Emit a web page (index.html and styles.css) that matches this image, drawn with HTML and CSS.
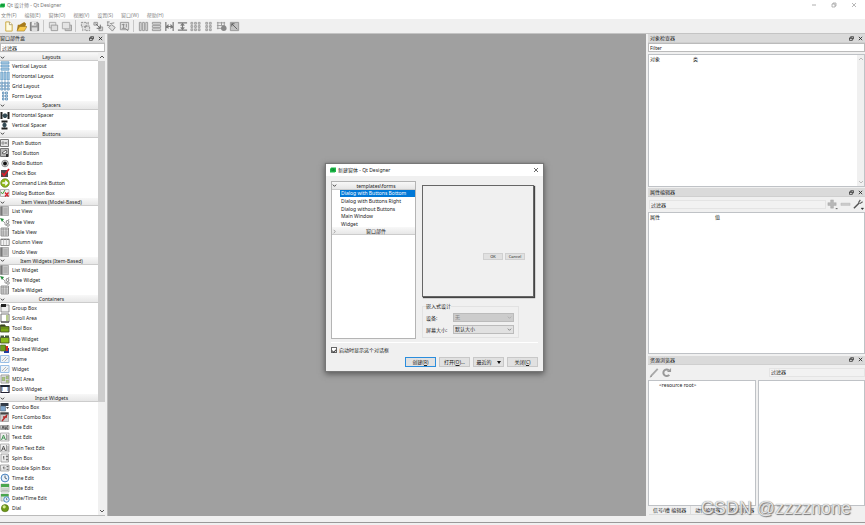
FILE: index.html
```html
<!DOCTYPE html>
<html lang="zh-CN">
<head>
<meta charset="utf-8">
<title>Qt 设计师 - Qt Designer</title>
<link rel="stylesheet" href="styles.css">
</head>
<body>
<svg class="defs" aria-hidden="true">
  <symbol id="qt" viewBox="0 0 10 10"><path d="M2 1h8v6L8 9H0V3z" fill="#1fb94a"/><path d="M3 3h3v3H3zM7 3v4" fill="none" stroke="#0a7a2a"/></symbol>
  <symbol id="float" viewBox="0 0 6 6"><path d="M2 2V.8h3.4v2.7H4M.6 2.3H4v3H.6zM.6 2.7H4" fill="none" stroke="#333" stroke-width=".9"/></symbol>
  <symbol id="x" viewBox="0 0 6 6"><path d="M1 1l4 4M5 1L1 5" fill="none" stroke="currentColor"/></symbol>
  <symbol id="down" viewBox="0 0 6 6"><path d="M1 2l2 2 2-2" fill="none" stroke="currentColor"/></symbol>
  <symbol id="up" viewBox="0 0 6 6"><path d="M1 4l2-2 2 2" fill="none" stroke="currentColor"/></symbol>
  <symbol id="right" viewBox="0 0 6 6"><path d="M2 1l2 2-2 2" fill="none" stroke="currentColor"/></symbol>

  <symbol id="new" viewBox="0 0 12 12"><path d="M3 1h4l3 3v7H3z" fill="#fffbe0" stroke="#c9a53a"/><path d="M7 1v3h3" fill="#fff" stroke="#8a7a4a" stroke-width=".7"/></symbol>
  <symbol id="open" viewBox="0 0 12 12"><path d="M1 10l1-6h2l5-3 2 2-2 7z" fill="#a77b1c"/><path d="M1 11l3-5h8l-3 5z" fill="#f7c94b" stroke="#94701c" stroke-width=".6"/></symbol>
  <symbol id="save" viewBox="0 0 12 12"><path d="M1.500 1.500h8l1 1v8h-9z" fill="#999" stroke="#777"/><path d="M3 1h5v4H3z" fill="#eee"/><path d="M3 7h6v4H3z" fill="#ddd"/><path d="M6 2h1v2H6z" fill="#777"/></symbol>
  <symbol id="front" viewBox="0 0 12 12"><path d="M1.500 1.500h7v6h-7z" fill="#e4e4e4" stroke="#aaa"/><path d="M3.500 4.500h7v6h-7z" fill="#ddd" stroke="#999"/></symbol>
  <symbol id="back" viewBox="0 0 12 12"><path d="M4.500 4.500h7v6h-7z" fill="#ccc" stroke="#999"/><path d="M1.500 1.500h8v7h-8z" fill="#e4e4e4" stroke="#aaa"/></symbol>
  <symbol id="ewid" viewBox="0 0 12 12"><path d="M1.500 1.500h6v5h-6zM5.500 5.500h5v5h-5z" fill="#ddd" stroke="#777" stroke-dasharray="2 1"/><path d="M9 1v3M3 8v3" stroke="#888"/></symbol>
  <symbol id="esig" viewBox="0 0 12 12"><path d="M1 1.500h4v3H1zM6.500 6.500h4v4h-4z" fill="#ccc" stroke="#888"/><path d="M3 3l5 5M8 4v4H4" fill="none" stroke="#555"/></symbol>
  <symbol id="ebud" viewBox="0 0 12 12"><path d="M1 1l3 0M2 1v4M1 5h3M6 4l4 3-3 4-4-4z" fill="#ddd" stroke="#777"/><path d="M4 3l5-1" stroke="#777"/></symbol>
  <symbol id="etab" viewBox="0 0 12 12"><path d="M1.500 1.500h9v8h-9z" fill="#ddd" stroke="#888"/><path d="M3 4h3M5 3v5M3 8h4l3 3M8 3v4" fill="none" stroke="#777"/></symbol>
  <symbol id="hl" viewBox="0 0 12 12"><path d="M1.500 1.500h2v9h-2zM5 1.500h2v9H5zM8.500 1.500h2v9h-2z" fill="#ddd" stroke="#888"/></symbol>
  <symbol id="vl" viewBox="0 0 12 12"><path d="M1.500 1.500h9v2h-9zM1.500 5h9v2h-9zM1.500 8.500h9v2h-9z" fill="#ddd" stroke="#888"/></symbol>
  <symbol id="hs" viewBox="0 0 12 12"><path d="M2 1v10M10 1v10M3 6h6M5 4L3 6l2 2M7 4l2 2-2 2" fill="none" stroke="#666" stroke-width="1.300"/></symbol>
  <symbol id="vs" viewBox="0 0 12 12"><path d="M1 2h10M1 10h10M6 3v6M4 5l2-2 2 2M4 7l2 2 2-2" fill="none" stroke="#666" stroke-width="1.300"/></symbol>
  <symbol id="gl" viewBox="0 0 12 12"><path d="M1 1.500h2v2H1zM5 1.500h2v2H5zM9 1.500h2v2H9zM1 5h2v2H1zM5 5h2v2H5zM9 5h2v2H9zM1 8.500h2v2H1zM5 8.500h2v2H5zM9 8.500h2v2H9z" fill="#ccc" stroke="#888" stroke-width=".9"/></symbol>
  <symbol id="fl" viewBox="0 0 12 12"><path d="M3 1.500h2v2H3zM7 1.500h2v2H7zM3 5h2v2H3zM7 5h2v2H7zM3 8.500h2v2H3zM7 8.500h2v2H7z" fill="#ccc" stroke="#888" stroke-width=".9"/></symbol>
  <symbol id="brk" viewBox="0 0 12 12"><path d="M1 2h9M1 5h9M1 8h5M2 1v8M6 1v4M9 1v4" stroke="#888"/><circle cx="8.500" cy="8" r="3" fill="#777"/></symbol>
  <symbol id="adj" viewBox="0 0 12 12"><path d="M1.500 1.500h9v9h-9z" fill="#bbb" stroke="#888"/><path d="M3 3l6 6M3 6V3h3" fill="none" stroke="#444"/></symbol>

  <symbol id="i-vl" viewBox="0 0 10 10"><path d="M1 .8h8v2H1zM1 4h8v2H1zM1 7.200h8v2H1z" fill="#a8cde8" stroke="#5d93bd" stroke-width=".7"/></symbol>
  <symbol id="i-hl" viewBox="0 0 10 10"><path d="M.8 1h2v8h-2zM4 1h2v8H4zM7.200 1h2v8h-2z" fill="#a8cde8" stroke="#5d93bd" stroke-width=".7"/></symbol>
  <symbol id="i-gl" viewBox="0 0 10 10"><path d="M.8 1h2v2h-2zM4 1h2v2H4zM7.200 1h2v2h-2zM.8 4h2v2h-2zM4 4h2v2H4zM7.200 4h2v2h-2zM.8 7h2v2h-2zM4 7h2v2H4zM7.200 7h2v2h-2z" fill="#cfe4f3" stroke="#5d8eb5" stroke-width=".8"/></symbol>
  <symbol id="i-fl" viewBox="0 0 10 10"><path d="M2.500 1h1.500v2H2.500zM5.500 1h2v2h-2zM2.500 4h1.500v2H2.500zM5.500 4h2v2h-2zM2.500 7h1.500v2H2.500zM5.500 7h2v2h-2z" fill="#cfe4f3" stroke="#5d8eb5" stroke-width=".8"/></symbol>
  <symbol id="i-hs" viewBox="0 0 10 10"><path d="M1.500 2v7M8.500 2v7" stroke="#222" stroke-width="2"/><path d="M2 5.500l2-2h2l2 2-2 2.500H4z" fill="#344b55"/></symbol>
  <symbol id="i-vs" viewBox="0 0 10 10"><path d="M1.500 1.500h6M1.500 8.500h6" stroke="#222" stroke-width="2"/><path d="M4.500 2l2 2v2l-2 2-2-2V4z" fill="#344b55"/></symbol>
  <symbol id="i-push" viewBox="0 0 10 10"><path d="M.5 1.500h8v7h-8z" fill="#e5e5e5" stroke="#777"/><path d="M2 4h2v2H2zM5.500 4v2M7.500 4L6 5l1.500 1" fill="none" stroke="#777" stroke-width=".7"/></symbol>
  <symbol id="i-tool" viewBox="0 0 10 10"><path d="M.5 .5h8v8h-8z" fill="#bbb" stroke="#777"/><path d="M2 5l4-3 1 2-3 2z" fill="#fff" stroke="#333" stroke-width=".7"/><path d="M6 6h2v3H6z" fill="#333"/></symbol>
  <symbol id="i-radio" viewBox="0 0 10 10"><circle cx="5" cy="5.500" r="3.300" fill="#ddd" stroke="#777" stroke-width=".8"/><circle cx="5" cy="5.500" r="1.900" fill="#111"/></symbol>
  <symbol id="i-check" viewBox="0 0 10 10"><path d="M1 2h7v7H1z" fill="#4a4a50"/><path d="M2 5l2 2.500L9 1" fill="none" stroke="#d8202c" stroke-width="1.800"/></symbol>
  <symbol id="i-cmd" viewBox="0 0 10 10"><circle cx="5" cy="5" r="4.300" fill="#8fb81a" stroke="#55700c" stroke-width=".6"/><path d="M2.300 5h5M5.200 2.800L7.500 5 5.200 7.200" fill="none" stroke="#fff" stroke-width="1.300"/></symbol>
  <symbol id="i-dbb" viewBox="0 0 10 10"><path d="M.5 1.500h8.500v7H.5z" fill="#eee" stroke="#999" stroke-width=".7"/><path d="M1 4l1.500 2L5 2" fill="none" stroke="#4a9e3a"/><path d="M5 4.500l3.500 4M8.500 4.500L5 8.500" stroke="#d5202c" stroke-width="1.300"/></symbol>
  <symbol id="i-list" viewBox="0 0 10 10"><path d="M.5 .5h8v9h-8z" fill="#c4c4c4" stroke="#999" stroke-width=".7"/><path d="M.5 .5h2v9h-2z" fill="#777"/><path d="M3.500 3h4M3.500 5h4M3.500 7h4" stroke="#999" stroke-width=".7"/></symbol>
  <symbol id="i-tree" viewBox="0 0 10 10"><path d="M0 1l4 1-2 3z" fill="#238a3a"/><path d="M3 4l2 2v2h2M6 4h2l1-2" fill="none" stroke="#888" stroke-width=".8"/><circle cx="7.500" cy="5" r="1.400" fill="#fff" stroke="#666" stroke-width=".7"/><circle cx="8" cy="8" r="1.300" fill="#fff" stroke="#666" stroke-width=".7"/></symbol>
  <symbol id="i-table" viewBox="0 0 10 10"><path d="M1 1h7.500v8H1z" fill="#eee" stroke="#777" stroke-width=".8"/><path d="M1 2.800h8M1 5h8M1 7h8M3.200 1v8M6 1v8" stroke="#888" stroke-width=".7"/></symbol>
  <symbol id="i-col" viewBox="0 0 10 10"><path d="M.8 2h8.400v6.500H.8z" fill="#f4f4f4" stroke="#777" stroke-width=".8"/><path d="M1 2.500h8" stroke="#777"/><path d="M3.600 2v6M6.400 2v6" stroke="#aaa" stroke-width=".7"/></symbol>
  <symbol id="i-group" viewBox="0 0 10 10"><path d="M1 2h8v7H1z" fill="#eee" stroke="#777" stroke-width=".8"/><path d="M1 1h5v3H1z" fill="#222"/></symbol>
  <symbol id="i-scroll" viewBox="0 0 10 10"><path d="M1 1h8v8H1z" fill="#fff" stroke="#777"/><path d="M6 2h2.500v6H6z" fill="#b8cc8c"/><path d="M1 9h8" stroke="#333"/></symbol>
  <symbol id="i-tbox" viewBox="0 0 10 10"><path d="M.5 2H5v1.500h4V9H.5z" fill="#7aa616" stroke="#3d4a1c" stroke-width=".8"/><path d="M.5 2H5v1.500H.5zM1 5h8" fill="#333" stroke="#4a601c" stroke-width=".6"/></symbol>
  <symbol id="i-tab" viewBox="0 0 10 10"><path d="M.5 3.500h8.500V9H.5z" fill="#8bbc1c" stroke="#3d4a1c" stroke-width=".8"/><path d="M.5 1.500H4v2H.5zM5 1.500h4v2H5z" fill="#465a3c"/></symbol>
  <symbol id="i-stack" viewBox="0 0 10 10"><path d="M4 4h5v5H4z" fill="#233ca5"/><path d="M3 2h5v5H3z" fill="#d02b26"/><path d="M.5 1h5v6h-5z" fill="#6d9e1d" stroke="#3d5a1c" stroke-width=".6"/></symbol>
  <symbol id="i-frame" viewBox="0 0 10 10"><path d="M.5 1.500h8.500v7H.5z" fill="#eef3f8" stroke="#9abfe6"/><path d="M2 7l4-4M4.500 7.500l3.500-3.500" stroke="#aaa" stroke-width=".8"/></symbol>
  <symbol id="i-mdi" viewBox="0 0 10 10"><path d="M1 1h8v8H1z" fill="#eee" stroke="#888" stroke-width=".8"/><path d="M2 3h3v4H2zM6 2h2.500v3H6zM6 6h2.500v2.500H6z" fill="#a9c77c" stroke="#888" stroke-width=".4"/></symbol>
  <symbol id="i-dock" viewBox="0 0 10 10"><path d="M1 1.500h8v7H1z" fill="#fff" stroke="#223" stroke-width="1.200"/><path d="M.5 1h9v2h-9z" fill="#1d2633"/><path d="M2 3h1v4H2zM7 3h1v4H7z" fill="#9cc0e8"/></symbol>
  <symbol id="i-combo" viewBox="0 0 10 10"><path d="M.5 1h8v3h-8z" fill="#333c48"/><path d="M.5 4h5v5h-5z" fill="#7fa6cc" stroke="#456" stroke-width=".5"/><path d="M6 5h3L7.500 7z" fill="#444"/></symbol>
  <symbol id="i-font" viewBox="0 0 10 10"><path d="M.5 .5h8v9h-8z" fill="#ccc" stroke="#888" stroke-width=".6"/><path d="M.5 .5h8v2h-8z" fill="#444"/><path d="M2 9l5-6M3 5h4" stroke="#b82a2a" stroke-width="1.400"/></symbol>
  <symbol id="i-line" viewBox="0 0 10 10"><path d="M.5 3.500h8.500v4H.5z" fill="#ccc" stroke="#888" stroke-width=".7"/><path d="M2 7l1-3 1 3M5 4v3h1V5M8 4H7v3h1" fill="none" stroke="#333" stroke-width=".7"/></symbol>
  <symbol id="i-text" viewBox="0 0 10 10"><path d="M.5 1h8.500v8H.5z" fill="#eee" stroke="#999" stroke-width=".7"/><path d="M1.500 8L3.500 3l2 5M2 6h3" fill="none" stroke="#4a9a5a"/><path d="M6.500 2v6M8 3v5" stroke="#777" stroke-width=".7"/></symbol>
  <symbol id="i-plain" viewBox="0 0 10 10"><path d="M.5 1h8.500v8H.5z" fill="#eee" stroke="#999" stroke-width=".7"/><path d="M1.500 8L3.500 3l2 5M2 6h3" fill="none" stroke="#444" stroke-width=".8"/><path d="M6.500 2v6M8 3v5" stroke="#777" stroke-width=".7"/></symbol>
  <symbol id="i-spin" viewBox="0 0 10 10"><path d="M1 1h7.500v8H1z" fill="#eee" stroke="#888" stroke-width=".7"/><path d="M3 4l1-1v4M6 4l1-1.500L8 4zM6 6l1 1.500L8 6z" fill="#666" stroke="#666" stroke-width=".5"/></symbol>
  <symbol id="i-dspin" viewBox="0 0 10 10"><path d="M.5 2h8.500v6H.5z" fill="#eee" stroke="#888" stroke-width=".7"/><path d="M1.500 6h.6M3 4.500l1-1v3M5 4v2.500M6.500 4l1-1 1 1zM6.500 6l1 1 1-1z" fill="#666" stroke="#666" stroke-width=".5"/></symbol>
  <symbol id="i-time" viewBox="0 0 10 10"><circle cx="5" cy="5" r="3.900" fill="#e8f1fa" stroke="#4580bd"/><path d="M5 2.500V5l2 1" fill="none" stroke="#345" stroke-width=".8"/></symbol>
  <symbol id="i-date" viewBox="0 0 10 10"><path d="M1 1h8v8H1z" fill="#dce8dc" stroke="#999" stroke-width=".6"/><path d="M1 1h8v3H1z" fill="#4aa64f"/><path d="M2 6h6M2 7.500h6" stroke="#aaa" stroke-width=".7"/></symbol>
  <symbol id="i-dt" viewBox="0 0 10 10"><path d="M1 1h7.500v7H1z" fill="#dce8dc" stroke="#999" stroke-width=".6"/><path d="M1 1h7.500v2.500H1z" fill="#4aa64f"/><circle cx="6.500" cy="6.500" r="2.700" fill="#e8f1fa" stroke="#3b7fc4" stroke-width=".9"/><path d="M6.500 5v1.700h1" fill="none" stroke="#345" stroke-width=".6"/></symbol>
  <symbol id="i-dial" viewBox="0 0 10 10"><circle cx="5" cy="5.200" r="3.600" fill="#6e9a17" stroke="#48690c" stroke-width=".6"/><circle cx="4.200" cy="3.800" r="1.600" fill="#d5ea92"/></symbol>
  <symbol id="plus" viewBox="0 0 12 12"><path d="M4 1h3v3h3v3H7v3H4V7H1V4h3z" fill="#b8b8b8" stroke="#999" stroke-width=".4"/><path d="M9.500 10.500h2" stroke="#555"/></symbol>
  <symbol id="minus" viewBox="0 0 12 12"><path d="M1 4.500h10v2.500H1z" fill="#ccc" stroke="#aaa" stroke-width=".4"/></symbol>
  <symbol id="wrench" viewBox="0 0 12 12"><path d="M1 10L7 4" stroke="#555" stroke-width="1.600"/><path d="M6 4l2-3M7.500 5l3-2" stroke="#555" stroke-width="1.200"/><path d="M9 10h2.500L10.200 11.500z" fill="#111" stroke="#111" stroke-width=".5"/></symbol>
  <symbol id="pencil" viewBox="0 0 12 12"><path d="M2 10l7.500-8" stroke="#a8a8a8" stroke-width="2"/><path d="M1 11l2-1" stroke="#777"/></symbol>
  <symbol id="reload" viewBox="0 0 12 12"><path d="M9 8.500A3.600 3.600 0 1 1 8.500 3.500" fill="none" stroke="#999" stroke-width="2.200"/><path d="M6.500 5.500h4.500V1z" fill="#999"/></symbol>
</svg>

<div class="app">
  <header class="titlebar">
    <svg class="logo"><use href="#qt"/></svg><span>Qt 设计师 - Qt Designer</span>
    <div class="winbtns">
      <button aria-label="最小化"><svg viewBox="0 0 6 6"><path d="M1 3h4" stroke="#999" stroke-width=".8"/></svg></button>
      <button aria-label="还原"><svg viewBox="0 0 6 6"><path d="M1 2h3v3H1zM2 2V1h3v3H4" fill="none" stroke="#999" stroke-width=".7"/></svg></button>
      <button aria-label="关闭"><svg viewBox="0 0 6 6"><path d="M1 1l4 4M5 1L1 5" stroke="#999" stroke-width=".7"/></svg></button>
    </div>
  </header>
  <nav class="menubar">
    <button>文件(F)</button><button>编辑(E)</button><button>窗体(O)</button><button>视图(V)</button><button>设置(S)</button><button>窗口(W)</button><button>帮助(H)</button>
  </nav>
  <div class="toolbar">
    <div class="group"><button aria-label="新建"><svg><use href="#new"/></svg></button><button aria-label="打开"><svg><use href="#open"/></svg></button><button aria-label="保存"><svg><use href="#save"/></svg></button></div>
    <div class="group"><button aria-label="置前"><svg><use href="#front"/></svg></button><button aria-label="置后"><svg><use href="#back"/></svg></button></div>
    <div class="group"><button aria-label="编辑控件"><svg><use href="#ewid"/></svg></button><button aria-label="编辑信号"><svg><use href="#esig"/></svg></button><button aria-label="编辑伙伴"><svg><use href="#ebud"/></svg></button><button aria-label="编辑顺序"><svg><use href="#etab"/></svg></button></div>
    <div class="group"><button aria-label="水平布局"><svg><use href="#hl"/></svg></button><button aria-label="垂直布局"><svg><use href="#vl"/></svg></button><button aria-label="水平分裂"><svg><use href="#hs"/></svg></button><button aria-label="垂直分裂"><svg><use href="#vs"/></svg></button><button aria-label="栅格布局"><svg><use href="#gl"/></svg></button><button aria-label="表单布局"><svg><use href="#fl"/></svg></button><button aria-label="打破布局"><svg><use href="#brk"/></svg></button><button aria-label="调整大小"><svg><use href="#adj"/></svg></button></div>
  </div>

  <div class="workspace">
    <aside class="dock widgets">
      <div class="dock-title"><h2>窗口部件盒</h2><button aria-label="浮动"><svg><use href="#float"/></svg></button><button aria-label="关闭"><svg><use href="#x"/></svg></button></div>
      <input class="filter" aria-label="过滤器" placeholder="过滤器">
      <div class="box">
        <ul class="list">
          <li class="cat"><svg><use href="#down"/></svg>Layouts</li>
          <li><svg><use href="#i-vl"/></svg>Vertical Layout</li>
          <li><svg><use href="#i-hl"/></svg>Horizontal Layout</li>
          <li><svg><use href="#i-gl"/></svg>Grid Layout</li>
          <li><svg><use href="#i-fl"/></svg>Form Layout</li>
          <li class="cat"><svg><use href="#down"/></svg>Spacers</li>
          <li><svg><use href="#i-hs"/></svg>Horizontal Spacer</li>
          <li><svg><use href="#i-vs"/></svg>Vertical Spacer</li>
          <li class="cat"><svg><use href="#down"/></svg>Buttons</li>
          <li><svg><use href="#i-push"/></svg>Push Button</li>
          <li><svg><use href="#i-tool"/></svg>Tool Button</li>
          <li><svg><use href="#i-radio"/></svg>Radio Button</li>
          <li><svg><use href="#i-check"/></svg>Check Box</li>
          <li><svg><use href="#i-cmd"/></svg>Command Link Button</li>
          <li><svg><use href="#i-dbb"/></svg>Dialog Button Box</li>
          <li class="cat"><svg><use href="#down"/></svg>Item Views (Model-Based)</li>
          <li><svg><use href="#i-list"/></svg>List View</li>
          <li><svg><use href="#i-tree"/></svg>Tree View</li>
          <li><svg><use href="#i-table"/></svg>Table View</li>
          <li><svg><use href="#i-col"/></svg>Column View</li>
          <li><svg><use href="#i-list"/></svg>Undo View</li>
          <li class="cat"><svg><use href="#down"/></svg>Item Widgets (Item-Based)</li>
          <li><svg><use href="#i-list"/></svg>List Widget</li>
          <li><svg><use href="#i-tree"/></svg>Tree Widget</li>
          <li><svg><use href="#i-table"/></svg>Table Widget</li>
          <li class="cat"><svg><use href="#down"/></svg>Containers</li>
          <li><svg><use href="#i-group"/></svg>Group Box</li>
          <li><svg><use href="#i-scroll"/></svg>Scroll Area</li>
          <li><svg><use href="#i-tbox"/></svg>Tool Box</li>
          <li><svg><use href="#i-tab"/></svg>Tab Widget</li>
          <li><svg><use href="#i-stack"/></svg>Stacked Widget</li>
          <li><svg><use href="#i-frame"/></svg>Frame</li>
          <li><svg><use href="#i-frame"/></svg>Widget</li>
          <li><svg><use href="#i-mdi"/></svg>MDI Area</li>
          <li><svg><use href="#i-dock"/></svg>Dock Widget</li>
          <li class="cat"><svg><use href="#down"/></svg>Input Widgets</li>
          <li><svg><use href="#i-combo"/></svg>Combo Box</li>
          <li><svg><use href="#i-font"/></svg>Font Combo Box</li>
          <li><svg><use href="#i-line"/></svg>Line Edit</li>
          <li><svg><use href="#i-text"/></svg>Text Edit</li>
          <li><svg><use href="#i-plain"/></svg>Plain Text Edit</li>
          <li><svg><use href="#i-spin"/></svg>Spin Box</li>
          <li><svg><use href="#i-dspin"/></svg>Double Spin Box</li>
          <li><svg><use href="#i-time"/></svg>Time Edit</li>
          <li><svg><use href="#i-date"/></svg>Date Edit</li>
          <li><svg><use href="#i-dt"/></svg>Date/Time Edit</li>
          <li><svg><use href="#i-dial"/></svg>Dial</li>
        </ul>
        <div class="scroll"><svg><use href="#up"/></svg><div class="thumb"></div><div class="rest"></div><svg><use href="#down"/></svg></div>
      </div>
    </aside>

    <main class="canvas"></main>

    <aside class="right">
      <section class="dock inspector">
        <div class="dock-title"><h2>对象检查器</h2><button aria-label="浮动"><svg><use href="#float"/></svg></button><button aria-label="关闭"><svg><use href="#x"/></svg></button></div>
        <input class="filter" aria-label="Filter" placeholder="Filter">
        <div class="view">
          <table><thead><tr><th class="c1">对象</th><th>类</th></tr></thead></table>
          <div class="scroll pale"><svg><use href="#up"/></svg><div class="rest"></div><svg><use href="#down"/></svg></div>
        </div>
      </section>
      <section class="dock props">
        <div class="dock-title"><h2>属性编辑器</h2><button aria-label="浮动"><svg><use href="#float"/></svg></button><button aria-label="关闭"><svg><use href="#x"/></svg></button></div>
        <div class="tools"><input class="filter flat" aria-label="过滤器" placeholder="过滤器"><button aria-label="添加"><svg><use href="#plus"/></svg></button><button aria-label="移除"><svg><use href="#minus"/></svg></button><button aria-label="配置"><svg><use href="#wrench"/></svg></button></div>
        <div class="view"><table><thead><tr><th class="c2">属性</th><th>值</th></tr></thead></table></div>
      </section>
      <section class="dock resources">
        <div class="dock-title"><h2>资源浏览器</h2><button aria-label="浮动"><svg><use href="#float"/></svg></button><button aria-label="关闭"><svg><use href="#x"/></svg></button></div>
        <div class="tools split"><div class="left"><button aria-label="编辑资源"><svg><use href="#pencil"/></svg></button><button aria-label="重新载入"><svg><use href="#reload"/></svg></button></div><input class="filter flat" aria-label="过滤器" placeholder="过滤器"></div>
        <div class="panes"><div class="view"><span class="root">&lt;resource root&gt;</span></div><div class="view"></div></div>
        <div class="tabs"><button>信号/槽 编辑器</button><button>动作编辑器</button><button class="active">资源浏览器</button></div>
      </section>
    </aside>
  </div>
  <footer class="status"></footer>
</div>

<div class="dialog" role="dialog" aria-labelledby="dlg">
  <div class="dlg-title"><svg class="logo"><use href="#qt"/></svg><span id="dlg">新建窗体 - Qt Designer</span><button aria-label="关闭"><svg viewBox="0 0 6 6"><path d="M1 1l4 4M5 1L1 5" stroke="#444" stroke-width=".8"/></svg></button></div>
  <div class="dlg-body">
    <div class="dlg-main">
      <div class="templates">
        <ul>
          <li class="cat"><svg><use href="#down"/></svg>templates\forms</li>
          <li><span class="sel">Dialog with Buttons Bottom</span></li>
          <li><span>Dialog with Buttons Right</span></li>
          <li><span>Dialog without Buttons</span></li>
          <li><span>Main Window</span></li>
          <li><span>Widget</span></li>
          <li class="cat"><svg class="dim"><use href="#right"/></svg>窗口部件</li>
        </ul>
      </div>
      <div class="side">
        <div class="preview"><span>OK</span><span>Cancel</span></div>
        <fieldset class="embedded">
          <legend>嵌入式设计</legend>
          <label for="device">设备:</label>
          <div class="pick"><select id="device" disabled><option>无</option></select><svg class="dim"><use href="#down"/></svg></div>
          <label for="size">屏幕大小:</label>
          <div class="pick"><select id="size"><option>默认大小</option></select><svg><use href="#down"/></svg></div>
        </fieldset>
      </div>
    </div>
    <label class="show"><input type="checkbox" checked>启动时显示这个对话框</label>
    <div class="actions">
      <button class="primary">创建(<u>R</u>)</button><button>打开(<u>O</u>)...</button><button>最近的<i class="tri"></i></button><button>关闭(<u>C</u>)</button>
    </div>
  </div>
</div>
<div class="mark">CSDN @zzzznone</div>
</body>
</html>
```

FILE: styles.css
```css
* { box-sizing: border-box; }
html, body { height: 100%; }
body {
  margin: 0;
  overflow: hidden;
  font: 5px/8px "Noto Sans", "Noto Sans CJK SC", sans-serif;
  color: #222;
  background: #f0f0f0;
}
button, input, select { font: inherit; color: inherit; margin: 0; }
button { border: 0; padding: 0; background: none; }
ul { list-style: none; margin: 0; padding: 0; }
svg { display: block; width: 6px; height: 6px; flex: none; }
.defs { position: absolute; width: 0; height: 0; }

.app { display: flex; flex-direction: column; height: 100%; }
.titlebar { display: flex; align-items: center; gap: 2px; height: 10px; background: #fff; color: #777; }
.titlebar .logo { width: 5px; height: 5px; }
.winbtns { display: flex; gap: 14px; margin-left: auto; padding-right: 8px; }
.menubar { display: flex; gap: 8px; height: 9px; padding: 0 1px; background: #fff; color: #888; }
.toolbar { display: flex; height: 14px; padding-left: 2px; align-items: center; }
.toolbar .group { display: flex; padding-right: 2px; margin-right: 3px; border-right: 1px solid #c8c8c8; }
.toolbar .group:last-child { border: 0; }
.toolbar button { width: 13px; height: 12px; padding-left: 1px; }
.toolbar svg { width: 11px; height: 11px; }
.toolbar .group:nth-child(n+3) svg { opacity: .85; }

.workspace { display: flex; flex: 1; min-height: 0; border-top: 1px solid #c4c4c4; }
.dock { display: flex; flex-direction: column; min-height: 0; }
.widgets { width: 108px; padding: 0 2px 0 0; border-right: 1px solid #bbb; }
.canvas { flex: 1; background: #a0a0a0; }
.right { display: flex; flex-direction: column; width: 219px; padding-left: 2px; }

.dock-title { display: flex; align-items: center; gap: 4px; height: 9px; padding-right: 2px; background: #dadada; border-bottom: 1px solid #cfcfcf; flex: none; }
.dock-title h2 { margin: 0 auto 0 0; font-size: 5px; font-weight: 400; }
.dock-title svg { width: 5px; height: 5px; }
.right .dock-title h2 { padding-left: 2px; }
.filter { height: 9px; width: 100%; padding: 0 1px; background: #fff; border: 1px solid #bbb; flex: none; min-width: 0; }
.filter::placeholder { color: #222; opacity: 1; }
.filter.flat { width: auto; background: #f2f2f2; border-color: #e4e4e4; }

.box { display: flex; flex: 1; min-height: 0; background: #fff; margin-top: 1px; border-bottom: 1px solid #bbb; }
.list { flex: 1; display: flex; flex-direction: column; padding-bottom: 2px; }
.list li { display: flex; align-items: center; gap: 2px; flex: 5 1 0; min-height: 0; }
.list li svg { width: 10px; height: 10px; }
.list .cat, .templates .cat { display: flex; align-items: center; background: linear-gradient(#f8f8f8, #e4e4e4); box-shadow: inset 0 -1px #ccc; justify-content: center; gap: 0; }
.list .cat { flex-grow: 4; }
.list .cat svg, .templates .cat svg { width: 5px; height: 5px; margin-right: auto; }
.list .cat::after, .templates .cat::after { content: ""; margin-left: auto; }
.scroll { display: flex; flex-direction: column; width: 7px; background: #f0f0f0; flex: none; align-items: center; color: #555; }
.scroll svg { height: 8px; }
.thumb { flex: 340; width: 100%; background: #cdcdcd; }
.rest { flex: 105; }
.scroll.pale { color: #bbb; }

.view { display: flex; justify-content: space-between; align-items: stretch; flex: 1; background: #fff; border: 1px solid #bfc2c6; min-height: 0; }
.view table { border-collapse: collapse; align-self: flex-start; }
.view th { font-weight: 400; text-align: left; padding: 0 0 0 1px; }
.view .c1 { width: 43px; }
.view .c2 { width: 65px; }
.inspector { flex: 155 1 0; }
.inspector .view { margin: 2px 0 1px; }
.props { flex: 168 1 0; }
.props .view { margin-bottom: 2px; }
.resources { flex: 161 1 0; }
.tools { display: flex; align-items: center; gap: 1px; height: 15px; flex: none; padding-left: 1px; }
.tools .filter { flex: 1; }
.tools button { width: 12px; height: 12px; }
.tools svg { width: 11px; height: 11px; }
.tools.split .left { display: flex; width: 119px; }
.panes { display: flex; gap: 2px; flex: 1; min-height: 0; }
.root { padding-left: 10px; }
.tabs { display: flex; height: 10px; flex: none; padding-left: 1px; }
.tabs button { padding: 0 4px; border-right: 1px solid #ddd; border-bottom: 1px solid #ddd; height: 9px; }
.status { height: 9px; border-bottom: 2px solid #f0f0f0; box-shadow: inset 0 -1px #999; }

.dialog { position: absolute; left: 326px; top: 164px; width: 217px; background: #f0f0f0; box-shadow: 0 0 1px 1px #777, 0 2px 6px 1px #555; }
.dlg-title { display: flex; align-items: center; gap: 2px; height: 12px; padding: 0 4px; background: #fff; }
.dlg-title .logo { width: 6px; height: 6px; }
.dlg-title button { margin-left: auto; }
.dlg-body { padding: 5px 5px 4px; }
.dlg-main { display: flex; gap: 6px; padding-bottom: 3px; border-bottom: 1px solid #fff; }
.templates { width: 85px; height: 158px; background: #fff; border: 1px solid #b4b4b4; }
.templates ul { display: flex; flex-direction: column; height: 53px; }
.templates li { display: flex; align-items: stretch; flex: 1 1 0; min-height: 0; padding-left: 8px; }
.templates .cat { padding-left: 0; }
.templates span { display: flex; align-items: center; flex: 1; padding: 0 1px; white-space: nowrap; }
.templates .sel { background: #0078d7; color: #fff; }
.dim { color: #999; }
.side { flex: 1; padding-top: 4px; }
.preview { display: flex; justify-content: flex-end; align-items: flex-end; gap: 2px; width: 112px; height: 112px; padding: 0 8px 36px; border: 1px solid #666; box-shadow: 1px 1px 1px #444; font-size: 4px; }
.preview span { width: 20px; height: 7px; line-height: 6px; text-align: center; background: #e1e1e1; border: 1px solid #d0d0d0; }
.embedded { display: grid; grid-template-columns: 24px 61px; gap: 3px; margin: 5px 0 0; width: 97px; padding: 3px; border: 1px solid #e2e2e2; align-items: center; }
.embedded legend { padding: 0; }
.pick { display: flex; align-items: center; }
.pick select { appearance: none; width: 61px; height: 9px; padding: 0 1px; line-height: 7px; border: 1px solid #bbb; border-radius: 0; background: #e1e1e1; }
.pick select:disabled { background: #ccc; color: #888; opacity: 1; }
.pick svg { margin-left: -7px; width: 5px; height: 5px; color: #777; }
.pick .dim { color: #aaa; }
.show { display: flex; align-items: center; gap: 2px; margin-top: 3px; }
.show input { appearance: none; display: grid; place-items: center; width: 6px; height: 6px; border: 1px solid #666; background: #fff; }
.show input:checked::after { content: ""; width: 3px; height: 2px; border: solid #444; border-width: 0 0 1px 1px; transform: rotate(-45deg); }
.actions { display: flex; justify-content: flex-end; gap: 3px; margin-top: 3px; }
.actions button { display: flex; align-items: center; justify-content: center; width: 31px; height: 10px; background: #e1e1e1; border: 1px solid #c8c8c8; }
.actions .primary { border-color: #2a8ddd; }
.tri { margin-left: 5px; border: 2px solid transparent; border-top: 3px solid #111; border-bottom: 0; }

.mark { position: absolute; right: 14px; bottom: 6px; font: 18px/22px "Liberation Sans", sans-serif; color: #e4e4e4; text-shadow: 1px 1px 1px #777, 0 0 1px #777; }
```
